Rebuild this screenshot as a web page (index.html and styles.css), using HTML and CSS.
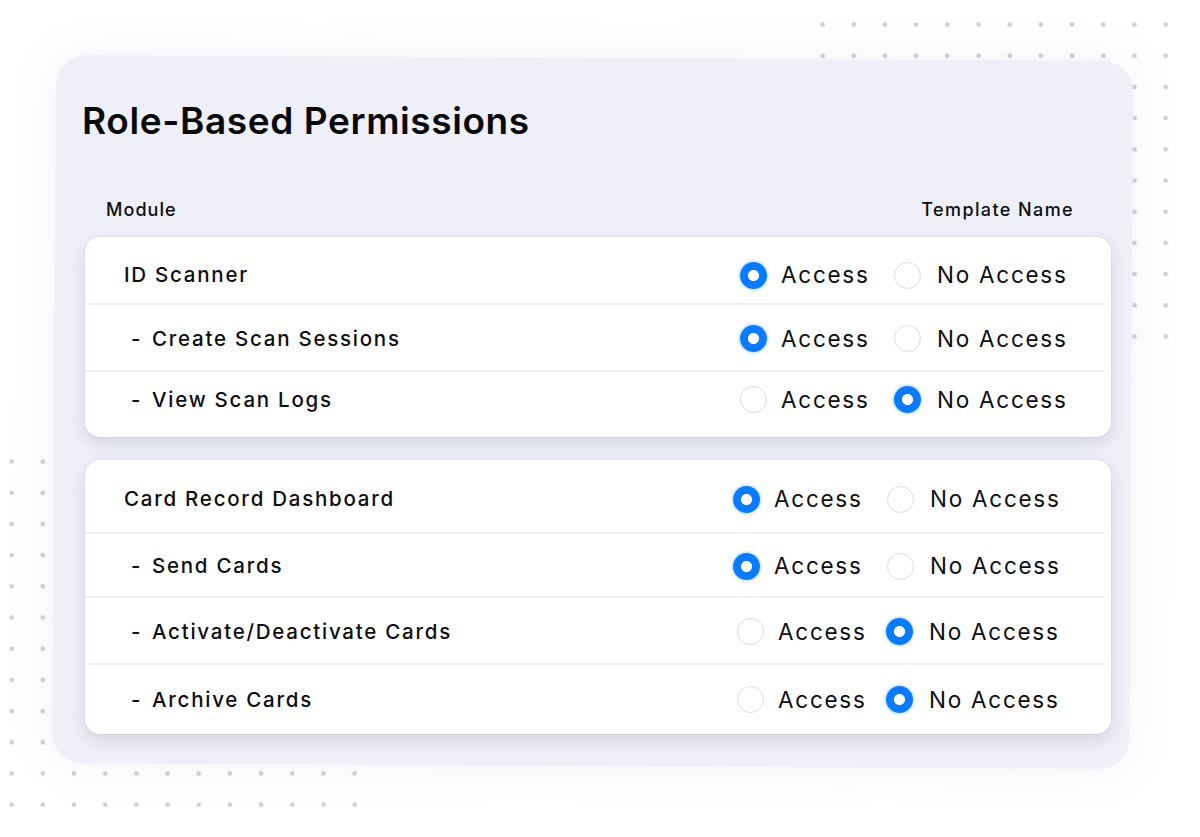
FILE: index.html
```html
<!DOCTYPE html>
<html lang="en">
<head>
<meta charset="utf-8">
<title>Role-Based Permissions</title>
<link rel="stylesheet" href="styles.css">
</head>
<body>
<div class="page">
  <div class="dots dots-tr"></div>
  <div class="dots dots-bl"></div>
  <section class="panel">
    <h1 class="title">Role-Based Permissions</h1>
    <div class="head">
      <span class="head-module">Module</span>
      <span class="head-template">Template Name</span>
    </div>

    <div class="card card-a">
      <div class="row">
        <span class="label">ID Scanner</span>
        <div class="opts">
          <span class="opt"><span class="radio on"></span><span class="opt-text">Access</span></span>
          <span class="opt"><span class="radio"></span><span class="opt-text">No Access</span></span>
        </div>
      </div>
      <div class="row">
        <span class="label sub"><span class="dash">-</span>Create Scan Sessions</span>
        <div class="opts">
          <span class="opt"><span class="radio on"></span><span class="opt-text">Access</span></span>
          <span class="opt"><span class="radio"></span><span class="opt-text">No Access</span></span>
        </div>
      </div>
      <div class="row">
        <span class="label sub"><span class="dash">-</span>View Scan Logs</span>
        <div class="opts">
          <span class="opt"><span class="radio"></span><span class="opt-text">Access</span></span>
          <span class="opt"><span class="radio on"></span><span class="opt-text">No Access</span></span>
        </div>
      </div>
    </div>

    <div class="card card-b">
      <div class="row">
        <span class="label">Card Record Dashboard</span>
        <div class="opts">
          <span class="opt"><span class="radio on"></span><span class="opt-text">Access</span></span>
          <span class="opt"><span class="radio"></span><span class="opt-text">No Access</span></span>
        </div>
      </div>
      <div class="row">
        <span class="label sub"><span class="dash">-</span>Send Cards</span>
        <div class="opts">
          <span class="opt"><span class="radio on"></span><span class="opt-text">Access</span></span>
          <span class="opt"><span class="radio"></span><span class="opt-text">No Access</span></span>
        </div>
      </div>
      <div class="row alt">
        <span class="label sub"><span class="dash">-</span>Activate/Deactivate Cards</span>
        <div class="opts">
          <span class="opt"><span class="radio"></span><span class="opt-text">Access</span></span>
          <span class="opt"><span class="radio on"></span><span class="opt-text">No Access</span></span>
        </div>
      </div>
      <div class="row alt">
        <span class="label sub"><span class="dash">-</span>Archive Cards</span>
        <div class="opts">
          <span class="opt"><span class="radio"></span><span class="opt-text">Access</span></span>
          <span class="opt"><span class="radio on"></span><span class="opt-text">No Access</span></span>
        </div>
      </div>
    </div>
  </section>
</div>
</body>
</html>
```
FILE: styles.css
```css
* { box-sizing: border-box; }

html, body {
  margin: 0;
  padding: 0;
  background: #ffffff;
}

body {
  font-family: "Inter", "Liberation Sans", sans-serif;
  color: #0d0d10;
}

.page {
  position: relative;
  width: 1200px;
  height: 837px;
  overflow: hidden;
  padding: 58px 0 0 54px;
}

/* decorative dot grids behind the panel */
.dots {
  position: absolute;
  background-image: radial-gradient(circle at center, #cfcfd4 0 2px, rgba(207,207,212,0) 2.7px);
  background-size: 31.2px 31.2px;
  z-index: 0;
}
.dots-tr {
  left: 807.4px;
  top: 9.4px;
  width: 374.4px;
  height: 343.2px;
}
.dots-bl {
  left: -3.9px;
  top: 446.4px;
  width: 374.4px;
  height: 374.4px;
}

/* main panel */
.panel {
  position: relative;
  z-index: 1;
  width: 1077px;
  padding: 40.5px 20px 31.5px 31px;
}
.panel::before {
  content: "";
  position: absolute;
  inset: 0;
  z-index: -1;
  background: #eeeff7;
  border-radius: 30px;
  transform: rotate(0.32deg);
  box-shadow: 0 0 44px rgba(150, 155, 195, 0.13);
}

.title {
  margin: 0 0 0 -3px;
  font-size: 37px;
  line-height: 44px;
  font-weight: 600;
  letter-spacing: 0.6px;
  color: #0a0a0d;
}

.head {
  display: flex;
  justify-content: space-between;
  margin-top: 55px;
  padding: 0 37px 0 21px;
  font-size: 18px;
  line-height: 24px;
  font-weight: 500;
}
.head-module { letter-spacing: 1.05px; }
.head-template { letter-spacing: 1.4px; }

/* white cards */
.card {
  margin-top: 15.5px;
  background: #ffffff;
  border-radius: 15px;
  box-shadow: 0 0 0 1px rgba(90, 95, 130, 0.05), 0 6px 16px rgba(100, 105, 145, 0.2);
}
.card-b { margin-top: 23px; }

.row {
  display: grid;
  grid-template-columns: 1fr 371px;
  align-items: center;
  height: 67px;
  padding-left: 39px;
  background: linear-gradient(#eff0f4, #eff0f4) no-repeat left bottom / calc(100% - 5px) 2px;
}
.row:last-child { background: none; }

.card-a .row:first-child { height: 68px; padding-top: 8px; }
.card-a .row:last-child { height: 65px; padding-bottom: 10px; }

.card-b .row { grid-template-columns: 1fr 378px; }
.card-b .row:nth-child(1) { height: 74px; padding-top: 4px; }
.card-b .row:nth-child(2) { height: 64px; }
.card-b .row:nth-child(3) { height: 67px; }
.card-b .row:nth-child(4) { height: 69px; }

.label {
  font-size: 20.5px;
  line-height: 28px;
  font-weight: 450;
  letter-spacing: 1.75px;
  white-space: nowrap;
}
.label.sub { padding-left: 7px; }
.dash {
  display: inline-block;
  width: 21px;
}

.opts {
  display: flex;
  align-items: center;
}
.row.alt .opts { padding-left: 4px; }

.opt {
  display: flex;
  align-items: center;
  gap: 14px;
}
.opt + .opt { gap: 16px; }
.opt:first-child { width: 154px; }
.row.alt .opt:first-child { width: 149px; }

.opt-text {
  font-size: 22.5px;
  line-height: 30px;
  letter-spacing: 1.75px;
  white-space: nowrap;
}

.radio {
  flex: none;
  width: 27px;
  height: 27px;
  border-radius: 50%;
  border: 1.5px solid #dcdde1;
  background: #ffffff;
}
.radio.on {
  border: none;
  background: radial-gradient(circle at center, #ffffff 0 5.2px, #0a7bff 5.9px);
  box-shadow: 0 0 3px 1px rgba(10, 123, 255, 0.3);
}
```
